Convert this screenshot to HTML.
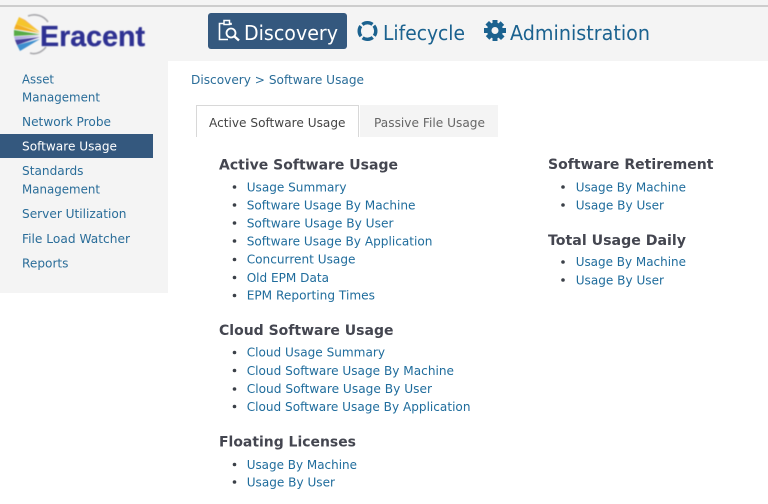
<!DOCTYPE html>
<html lang="en">
<head>
<meta charset="utf-8">
<title>Software Usage</title>
<style>
html,body{margin:0;padding:0;background:#fff;width:768px;height:504px;overflow:hidden}
svg{display:block;filter:blur(.3px)}
text{font-family:"DejaVu Sans","Liberation Sans",sans-serif;font-size:12.5px;fill:#1f6c9c}
.h{font-weight:700;font-size:14.5px;fill:#444650}
.n{font-size:20px;fill:#1b628f}
.s{fill:#2a6d99}
.t{fill:#444}
.g{fill:#666}
.logo{filter:blur(.5px)}
</style>
</head>
<body>
<svg width="768" height="504" viewBox="0 0 768 504" xmlns="http://www.w3.org/2000/svg">
<rect width="768" height="504" fill="#fff"/>
<rect width="768" height="61" fill="#f4f4f4"/>
<rect y="5" width="768" height="2" fill="#cdcdcd"/>
<rect y="61" width="168" height="232" fill="#f4f4f4"/>

<!-- logo -->
<g class="logo">
<path d="M28 16C36 13 44 16 48 22M30 53C36 55 42 52 46 47" fill="none" stroke="#a9a9ad" stroke-width="1.6"/>
<polygon points="19,17 16,24 40,32" fill="#f5c52c"/>
<polygon points="19,17 25,20 40,32" fill="#f4a93c"/>
<polygon points="16,24 14,29 40,33" fill="#f3ae22"/>
<polygon points="14,30 14,36 40,34.500" fill="#58ab46"/>
<polygon points="14,36.500 15,40 40,35.500" fill="#b3aee0"/>
<polygon points="15,40 17,45 40,37" fill="#45409a"/>
<polygon points="17,45 20,51 40,39" fill="#3f8fcf"/>
<text x="40" y="46" textLength="105" lengthAdjust="spacingAndGlyphs" style="font-family:'Liberation Sans',sans-serif;font-size:29px;font-weight:700;fill:#2e3192;stroke:#2e3192;stroke-width:.3">Eracent</text>
</g>

<!-- nav -->
<rect x="208" y="13" width="139" height="36" rx="3" fill="#34587e"/>
<g fill="none" stroke="#fff">
<path d="M224 23.500H219.500V39.500H228M231 25V23.500H229" stroke-width="1.6"/>
<rect x="224" y="20.500" width="5.500" height="4" stroke-width="1.500"/>
<circle cx="231" cy="33" r="4.500" stroke-width="1.800"/>
<path d="M234.500 36.500L239 40.500" stroke-width="2.400"/>
</g>
<text class="n" x="244" y="40" textLength="94" lengthAdjust="spacingAndGlyphs" style="fill:#fff">Discovery</text>

<circle cx="367.500" cy="31" r="8.300" fill="none" stroke="#1b628f" stroke-width="3.400" stroke-dasharray="10.800 2.240" transform="rotate(-40 367.500 31)"/>
<text class="n" x="383" y="40" textLength="82" lengthAdjust="spacingAndGlyphs">Lifecycle</text>

<g fill="#1b628f">
<path fill-rule="evenodd" d="M495 22.500A8 8 0 1 1 495 38.500A8 8 0 1 1 495 22.500ZM495 27A3.500 3.500 0 1 0 495 34A3.500 3.500 0 1 0 495 27Z"/>
<rect x="492.500" y="20" width="5" height="4"/>
<rect x="492.500" y="37" width="5" height="4"/>
<rect x="484" y="28" width="4" height="5"/>
<rect x="502" y="28" width="4" height="5"/>
<rect x="492.500" y="20" width="5" height="4" transform="rotate(45 495 30.500)"/>
<rect x="492.500" y="37" width="5" height="4" transform="rotate(45 495 30.500)"/>
<rect x="484" y="28" width="4" height="5" transform="rotate(45 495 30.500)"/>
<rect x="502" y="28" width="4" height="5" transform="rotate(45 495 30.500)"/>
</g>
<text class="n" x="510" y="40" textLength="140" lengthAdjust="spacingAndGlyphs">Administration</text>

<!-- sidebar -->
<rect y="134" width="153" height="24" fill="#34587e"/>
<text class="s" x="22" y="83.500" textLength="32" lengthAdjust="spacingAndGlyphs">Asset</text>
<text class="s" x="22" y="101.500" textLength="78" lengthAdjust="spacingAndGlyphs">Management</text>
<text class="s" x="22" y="126" textLength="89" lengthAdjust="spacingAndGlyphs">Network Probe</text>
<text x="22" y="150.500" textLength="95" lengthAdjust="spacingAndGlyphs" style="fill:#fff">Software Usage</text>
<text class="s" x="22" y="175" textLength="61.500" lengthAdjust="spacingAndGlyphs">Standards</text>
<text class="s" x="22" y="193.500" textLength="78" lengthAdjust="spacingAndGlyphs">Management</text>
<text class="s" x="22" y="218" textLength="104.500" lengthAdjust="spacingAndGlyphs">Server Utilization</text>
<text class="s" x="22" y="243" textLength="108" lengthAdjust="spacingAndGlyphs">File Load Watcher</text>
<text class="s" x="22" y="267.500" textLength="46.500" lengthAdjust="spacingAndGlyphs">Reports</text>

<!-- breadcrumb -->
<text class="s" x="191" y="84" textLength="173" lengthAdjust="spacingAndGlyphs">Discovery &gt; Software Usage</text>

<!-- tabs -->
<rect x="360" y="105" width="138" height="32" fill="#f4f4f4"/>
<path d="M196.500 137V105.500H358.500V137" fill="none" stroke="#d8d8d8"/>
<text class="t" x="209" y="127" textLength="136.500" lengthAdjust="spacingAndGlyphs">Active Software Usage</text>
<text class="g" x="374" y="127" textLength="111" lengthAdjust="spacingAndGlyphs">Passive File Usage</text>

<!-- left column -->
<text class="h" x="219" y="169.500" textLength="179" lengthAdjust="spacingAndGlyphs">Active Software Usage</text>
<g fill="#3b4048">
<circle cx="234.500" cy="187" r="1.800"/><circle cx="234.500" cy="205" r="1.800"/><circle cx="234.500" cy="223" r="1.800"/><circle cx="234.500" cy="241" r="1.800"/><circle cx="234.500" cy="259.500" r="1.800"/><circle cx="234.500" cy="277.500" r="1.800"/><circle cx="234.500" cy="295.500" r="1.800"/>
<circle cx="234.500" cy="352.500" r="1.800"/><circle cx="234.500" cy="370.500" r="1.800"/><circle cx="234.500" cy="389" r="1.800"/><circle cx="234.500" cy="406.500" r="1.800"/>
<circle cx="234.500" cy="464.500" r="1.800"/><circle cx="234.500" cy="482" r="1.800"/>
<circle cx="563" cy="187" r="1.800"/><circle cx="563" cy="205" r="1.800"/><circle cx="563" cy="262" r="1.800"/><circle cx="563" cy="280" r="1.800"/>
</g>
<text x="246.700" y="191.500" textLength="99.800" lengthAdjust="spacingAndGlyphs">Usage Summary</text>
<text x="246.700" y="209.500" textLength="168.800" lengthAdjust="spacingAndGlyphs">Software Usage By Machine</text>
<text x="246.700" y="227.500" textLength="146.800" lengthAdjust="spacingAndGlyphs">Software Usage By User</text>
<text x="246.700" y="245.500" textLength="185.800" lengthAdjust="spacingAndGlyphs">Software Usage By Application</text>
<text x="246.700" y="263.500" textLength="108.800" lengthAdjust="spacingAndGlyphs">Concurrent Usage</text>
<text x="246.700" y="282" textLength="82.300" lengthAdjust="spacingAndGlyphs">Old EPM Data</text>
<text x="246.700" y="299.500" textLength="128.300" lengthAdjust="spacingAndGlyphs">EPM Reporting Times</text>

<text class="h" x="219" y="335" textLength="174.500" lengthAdjust="spacingAndGlyphs">Cloud Software Usage</text>
<text x="246.700" y="356.500" textLength="138.300" lengthAdjust="spacingAndGlyphs">Cloud Usage Summary</text>
<text x="246.700" y="375" textLength="207.300" lengthAdjust="spacingAndGlyphs">Cloud Software Usage By Machine</text>
<text x="246.700" y="393" textLength="185.300" lengthAdjust="spacingAndGlyphs">Cloud Software Usage By User</text>
<text x="246.700" y="411" textLength="223.800" lengthAdjust="spacingAndGlyphs">Cloud Software Usage By Application</text>

<text class="h" x="219" y="446.500" textLength="137" lengthAdjust="spacingAndGlyphs">Floating Licenses</text>
<text x="246.700" y="469" textLength="110.300" lengthAdjust="spacingAndGlyphs">Usage By Machine</text>
<text x="246.700" y="486.500" textLength="88.300" lengthAdjust="spacingAndGlyphs">Usage By User</text>

<!-- right column -->
<text class="h" x="548" y="169" textLength="165.500" lengthAdjust="spacingAndGlyphs">Software Retirement</text>
<text x="575.700" y="191.500" textLength="110.300" lengthAdjust="spacingAndGlyphs">Usage By Machine</text>
<text x="575.700" y="209.500" textLength="88.300" lengthAdjust="spacingAndGlyphs">Usage By User</text>
<text class="h" x="548" y="245" textLength="138" lengthAdjust="spacingAndGlyphs">Total Usage Daily</text>
<text x="575.700" y="266" textLength="110.300" lengthAdjust="spacingAndGlyphs">Usage By Machine</text>
<text x="575.700" y="284.500" textLength="88.300" lengthAdjust="spacingAndGlyphs">Usage By User</text>
</svg>
</body>
</html>
